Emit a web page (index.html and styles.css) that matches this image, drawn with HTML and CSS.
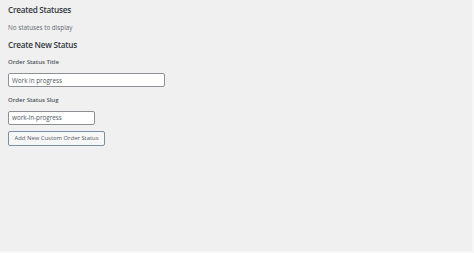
FILE: index.html
```html
<!DOCTYPE html>
<html lang="en">
<head>
<meta charset="utf-8">
<title>Custom Order Statuses</title>
<link rel="stylesheet" href="styles.css">
</head>
<body>
<div class="page">
  <h2 class="heading first">Created Statuses</h2>
  <p class="empty">No statuses to display</p>
  <h2 class="heading second">Create New Status</h2>
  <form class="form">
    <label class="label label-title" for="title">Order Status Title</label>
    <input class="field field-title" id="title" type="text" value="Work in progress">
    <label class="label label-slug" for="slug">Order Status Slug</label>
    <input class="field field-slug" id="slug" type="text" value="work-in-progress">
    <button class="button" type="button">Add New Custom Order Status</button>
  </form>
</div>
</body>
</html>
```
FILE: styles.css
```css
html, body {
  margin: 0;
  padding: 0;
  background: #f7f7f8;
}
.page {
  box-sizing: border-box;
  width: 472px;
  height: 251px;
  background: #f0f0f1;
  padding: 0 8px;
  display: flex;
  flex-direction: column;
  align-items: flex-start;
  font-family: "Open Sans", "Noto Sans", sans-serif;
  color: #3c434a;
}
.heading {
  margin: 0;
  font-size: 8.2px;
  letter-spacing: -0.25px;
  line-height: 12px;
  font-weight: 600;
  color: #32373c;
}
.first { margin-top: 4px; }
.second { margin-top: 6px; }
.empty {
  margin: 7px 0 0;
  font-size: 6.3px;
  line-height: 10px;
  color: #646970;
}
.form {
  display: flex;
  flex-direction: column;
  align-items: flex-start;
}
.label {
  font-size: 6.1px;
  letter-spacing: -0.05px;
  line-height: 10px;
  font-weight: 600;
  color: #50575e;
}
.label-title { margin-top: 5.5px; }
.label-slug { margin-top: 7.5px; }
.field {
  box-sizing: border-box;
  margin: 6.5px 0 0;
  padding: 0 3px;
  border: 0.6px solid #8c8f94;
  border-radius: 2px;
  background: #fff;
  font-family: inherit;
  font-size: 6.3px;
  color: #50575e;
  outline: none;
}
.field-title { width: 157px; height: 14px; }
.field-slug { width: 87px; height: 13.5px; }
.button {
  box-sizing: border-box;
  margin-top: 6.5px;
  width: 97px;
  height: 14.5px;
  padding: 0 4px;
  border: 0.6px solid #7b90a5;
  border-radius: 2px;
  background: #f6f7f7;
  color: #50575e;
  font-family: inherit;
  font-size: 5.9px;
  white-space: nowrap;
}
```
